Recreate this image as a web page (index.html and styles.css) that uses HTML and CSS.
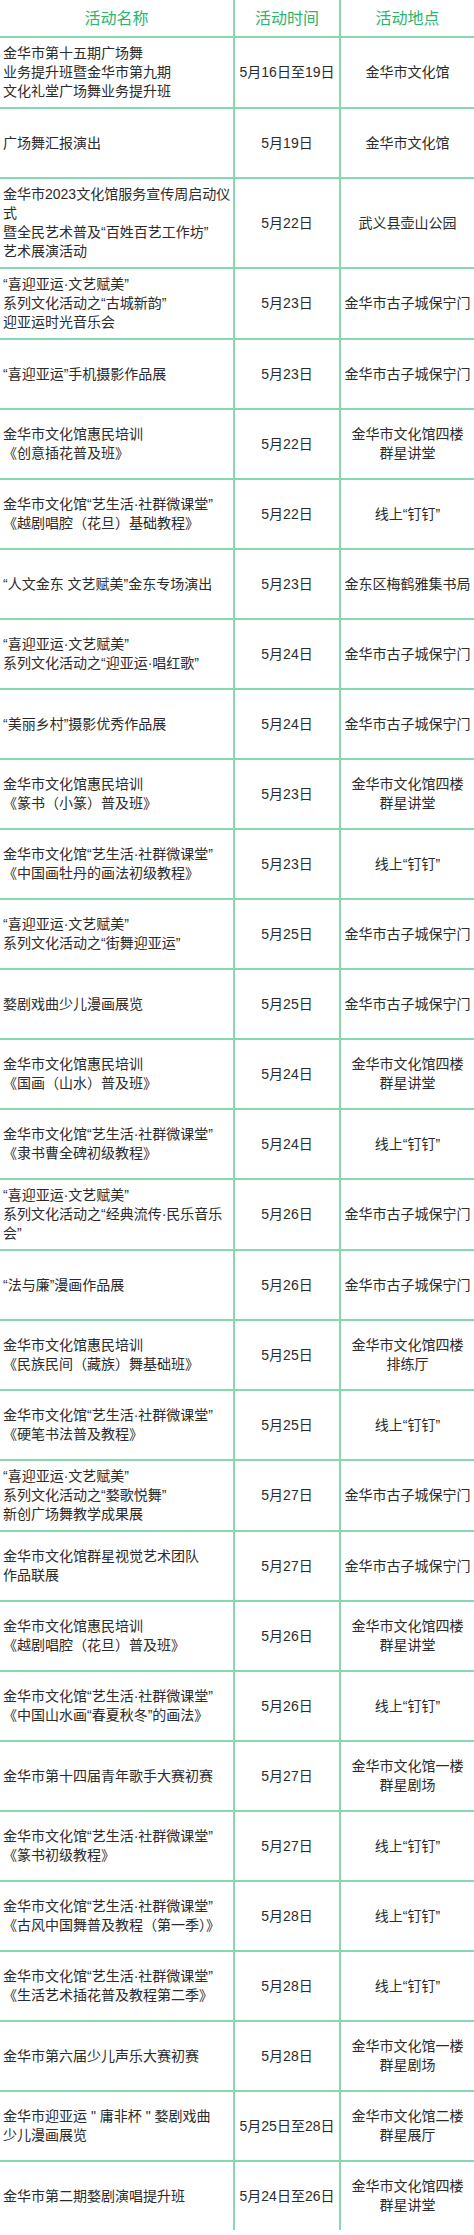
FILE: index.html
```html
<!DOCTYPE html>
<html lang="zh-CN">
<head>
<meta charset="utf-8">
<link rel="stylesheet" href="styles.css">
</head>
<body>
<table class="sched">
<colgroup><col class="c-name"><col class="c-time"><col class="c-place"></colgroup>
<thead>
<tr><th>活动名称</th><th>活动时间</th><th>活动地点</th></tr>
</thead>
<tbody>
<tr><td class="name">金华市第十五期广场舞<br>业务提升班暨金华市第九期<br>文化礼堂广场舞业务提升班</td><td>5月16日至19日</td><td>金华市文化馆</td></tr>
<tr><td class="name">广场舞汇报演出</td><td>5月19日</td><td>金华市文化馆</td></tr>
<tr><td class="name">金华市2023文化馆服务宣传周启动仪式<br>暨全民艺术普及“百姓百艺工作坊”<br>艺术展演活动</td><td>5月22日</td><td>武义县壶山公园</td></tr>
<tr><td class="name">“喜迎亚运·文艺赋美”<br>系列文化活动之“古城新韵”<br>迎亚运时光音乐会</td><td>5月23日</td><td>金华市古子城保宁门</td></tr>
<tr><td class="name">“喜迎亚运”手机摄影作品展</td><td>5月23日</td><td>金华市古子城保宁门</td></tr>
<tr><td class="name">金华市文化馆惠民培训<br>《创意插花普及班》</td><td>5月22日</td><td>金华市文化馆四楼<br>群星讲堂</td></tr>
<tr><td class="name">金华市文化馆“艺生活·社群微课堂”<br>《越剧唱腔（花旦）基础教程》</td><td>5月22日</td><td>线上“钉钉”</td></tr>
<tr><td class="name">“人文金东 文艺赋美”金东专场演出</td><td>5月23日</td><td>金东区梅鹤雅集书局</td></tr>
<tr><td class="name">“喜迎亚运·文艺赋美”<br>系列文化活动之“迎亚运·唱红歌”</td><td>5月24日</td><td>金华市古子城保宁门</td></tr>
<tr><td class="name">“美丽乡村”摄影优秀作品展</td><td>5月24日</td><td>金华市古子城保宁门</td></tr>
<tr><td class="name">金华市文化馆惠民培训<br>《篆书（小篆）普及班》</td><td>5月23日</td><td>金华市文化馆四楼<br>群星讲堂</td></tr>
<tr><td class="name">金华市文化馆“艺生活·社群微课堂”<br>《中国画牡丹的画法初级教程》</td><td>5月23日</td><td>线上“钉钉”</td></tr>
<tr><td class="name">“喜迎亚运·文艺赋美”<br>系列文化活动之“街舞迎亚运”</td><td>5月25日</td><td>金华市古子城保宁门</td></tr>
<tr><td class="name">婺剧戏曲少儿漫画展览</td><td>5月25日</td><td>金华市古子城保宁门</td></tr>
<tr><td class="name">金华市文化馆惠民培训<br>《国画（山水）普及班》</td><td>5月24日</td><td>金华市文化馆四楼<br>群星讲堂</td></tr>
<tr><td class="name">金华市文化馆“艺生活·社群微课堂”<br>《隶书曹全碑初级教程》</td><td>5月24日</td><td>线上“钉钉”</td></tr>
<tr><td class="name">“喜迎亚运·文艺赋美”<br>系列文化活动之“经典流传·民乐音乐会”</td><td>5月26日</td><td>金华市古子城保宁门</td></tr>
<tr><td class="name">“法与廉”漫画作品展</td><td>5月26日</td><td>金华市古子城保宁门</td></tr>
<tr><td class="name">金华市文化馆惠民培训<br>《民族民间（藏族）舞基础班》</td><td>5月25日</td><td>金华市文化馆四楼<br>排练厅</td></tr>
<tr><td class="name">金华市文化馆“艺生活·社群微课堂”<br>《硬笔书法普及教程》</td><td>5月25日</td><td>线上“钉钉”</td></tr>
<tr><td class="name">“喜迎亚运·文艺赋美”<br>系列文化活动之“婺歌悦舞”<br>新创广场舞教学成果展</td><td>5月27日</td><td>金华市古子城保宁门</td></tr>
<tr><td class="name">金华市文化馆群星视觉艺术团队<br>作品联展</td><td>5月27日</td><td>金华市古子城保宁门</td></tr>
<tr><td class="name">金华市文化馆惠民培训<br>《越剧唱腔（花旦）普及班》</td><td>5月26日</td><td>金华市文化馆四楼<br>群星讲堂</td></tr>
<tr><td class="name">金华市文化馆“艺生活·社群微课堂”<br>《中国山水画“春夏秋冬”的画法》</td><td>5月26日</td><td>线上“钉钉”</td></tr>
<tr><td class="name">金华市第十四届青年歌手大赛初赛</td><td>5月27日</td><td>金华市文化馆一楼<br>群星剧场</td></tr>
<tr><td class="name">金华市文化馆“艺生活·社群微课堂”<br>《篆书初级教程》</td><td>5月27日</td><td>线上“钉钉”</td></tr>
<tr><td class="name">金华市文化馆“艺生活·社群微课堂”<br>《古风中国舞普及教程（第一季）》</td><td>5月28日</td><td>线上“钉钉”</td></tr>
<tr><td class="name">金华市文化馆“艺生活·社群微课堂”<br>《生活艺术插花普及教程第二季》</td><td>5月28日</td><td>线上“钉钉”</td></tr>
<tr><td class="name">金华市第六届少儿声乐大赛初赛</td><td>5月28日</td><td>金华市文化馆一楼<br>群星剧场</td></tr>
<tr><td class="name">金华市迎亚运 " 庸非杯 " 婺剧戏曲<br>少儿漫画展览</td><td>5月25日至28日</td><td>金华市文化馆二楼<br>群星展厅</td></tr>
<tr><td class="name">金华市第二期婺剧演唱提升班</td><td>5月24日至26日</td><td>金华市文化馆四楼<br>群星讲堂</td></tr>
</tbody>
</table>
</body>
</html>
```

FILE: styles.css
```css
html, body {
  margin: 0;
  padding: 0;
  background: #ffffff;
}

body {
  font-family: "Liberation Sans", "Noto Sans CJK SC", sans-serif;
  color: #2b2b2b;
}

.sched {
  width: 474px;
  table-layout: fixed;
  border-collapse: collapse;
  font-size: 14px;
  line-height: 19px;
}

.c-name { width: 234px; }
.c-time { width: 106px; }
.c-place { width: 134px; }

.sched th {
  height: 36px;
  padding: 0;
  font-size: 16px;
  font-weight: normal;
  color: #2bb56a;
  text-align: center;
  vertical-align: middle;
  border-bottom: 2px solid #86d8ae;
  border-left: 2px solid #86d8ae;
}

.sched td {
  height: 56px;
  padding: 6px 2px;
  text-align: center;
  vertical-align: middle;
  border-top: 2px solid #86d8ae;
  border-left: 2px solid #86d8ae;
}

.sched th:first-child,
.sched td:first-child {
  border-left: none;
}

.sched td.name {
  text-align: left;
  padding-left: 3px;
}
```
